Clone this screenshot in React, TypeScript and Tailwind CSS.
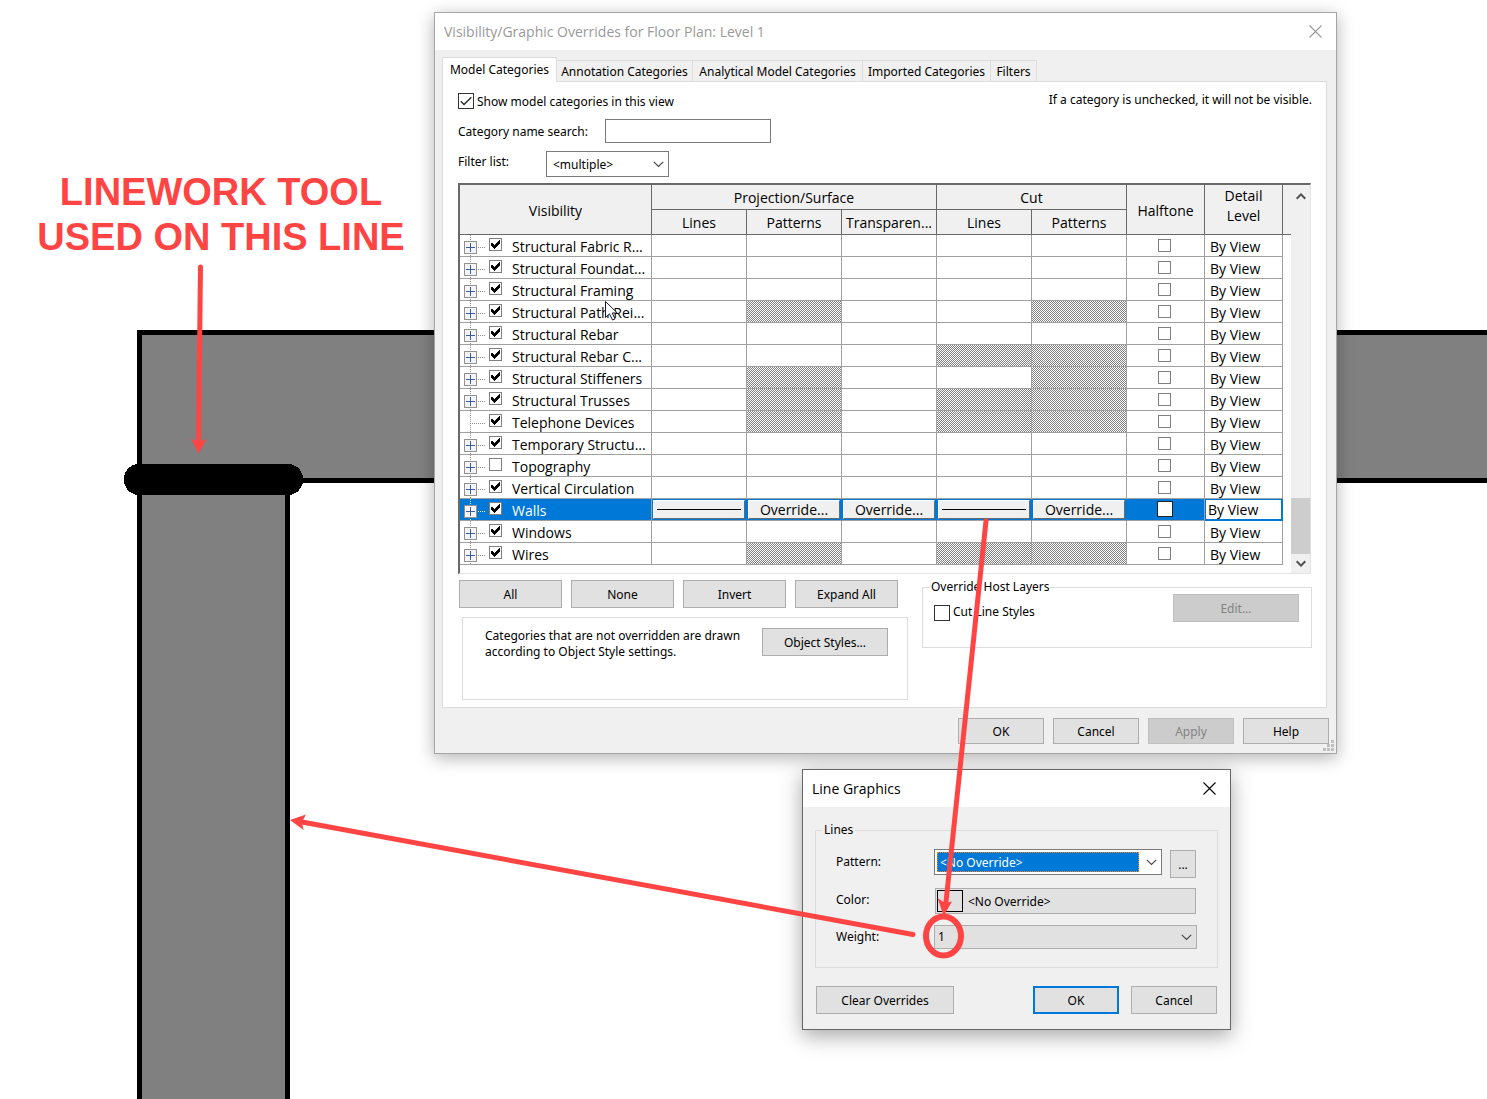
import type { ReactNode } from 'react';
import clsx from 'clsx';

type Row = {
  name: string;
  checked?: boolean;
  leaf?: boolean;
  // columns that can't be overridden, as indexes into the five override columns
  disabled?: number[];
  selected?: boolean;
};

const rows: Row[] = [
  { name: 'Structural Fabric R...' },
  { name: 'Structural Foundat...' },
  { name: 'Structural Framing' },
  { name: 'Structural Path Rei...', disabled: [1, 4] },
  { name: 'Structural Rebar' },
  { name: 'Structural Rebar C...', disabled: [3, 4] },
  { name: 'Structural Stiffeners', disabled: [1, 4] },
  { name: 'Structural Trusses', disabled: [1, 3, 4] },
  { name: 'Telephone Devices', leaf: true, disabled: [1, 3, 4] },
  { name: 'Temporary Structu...' },
  { name: 'Topography', checked: false },
  { name: 'Vertical Circulation' },
  { name: 'Walls', selected: true },
  { name: 'Windows' },
  { name: 'Wires', disabled: [1, 3, 4] },
];

const overrideColumns = ['line', 'text', 'text', 'line', 'text'];

const tabs = [
  'Annotation Categories',
  'Analytical Model Categories',
  'Imported Categories',
  'Filters',
];

const Chevron = ({ className }: { className?: string }) => (
  <svg className={clsx('pointer-events-none shrink-0', className)} width="11" height="7" viewBox="0 0 11 7" fill="none" stroke="#444" strokeWidth="1.1">
    <path d="M0.8 0.8 5.5 5.5 10.2 0.8" />
  </svg>
);

const CloseIcon = () => (
  <svg width="13" height="13" viewBox="0 0 13 13" stroke="currentColor" strokeWidth="1.1">
    <path d="M0.5 0.5 12.5 12.5M12.5 0.5 0.5 12.5" />
  </svg>
);

type ButtonProps = {
  children: ReactNode;
  className?: string;
  disabled?: boolean;
  primary?: boolean;
};

const Button = ({ children, className, disabled, primary }: ButtonProps) => (
  <button
    type="button"
    disabled={disabled}
    className={clsx(
      'shrink-0 pt-[2px]',
      primary ? 'border-2 border-[#0078d7]' : 'border',
      !primary && (disabled ? 'border-[#bfbfbf]' : 'border-[#adadad]'),
      disabled ? 'bg-[#cccccc] text-[#838383]' : 'bg-[#e1e1e1]',
      className,
    )}
  >
    {children}
  </button>
);

type CheckBoxProps = {
  label: string;
  id?: string;
  checked?: boolean;
  variant?: 'dialog' | 'grid' | 'halftone';
};

const CheckBox = ({ label, id, checked = false, variant = 'dialog' }: CheckBoxProps) => (
  <span className="inline-grid shrink-0 place-items-center">
    <input
      type="checkbox"
      id={id}
      aria-label={id ? undefined : label}
      defaultChecked={checked}
      className={clsx(
        'peer col-start-1 row-start-1 appearance-none border bg-white',
        variant === 'dialog' && 'size-4 border-[#333]',
        variant === 'grid' && 'size-[13px] border-[#808080]',
        variant === 'halftone' && 'size-4 border-[#222]',
      )}
    />
    {variant === 'grid' ? (
      <svg className="pointer-events-none col-start-1 row-start-1 hidden peer-checked:block" width="13" height="13" viewBox="0 0 13 13">
        <path d="M2 5h2v1h1v1h1V6h1V5h1V4h1V3h1V2h1v4h-1v1H9v1H8v1H7v1H6v1H5v-1H4V9H3V8H2z" />
      </svg>
    ) : (
      <svg className="pointer-events-none col-start-1 row-start-1 hidden peer-checked:block" width="16" height="16" viewBox="0 0 16 16" fill="none" stroke="#222" strokeWidth="1.3">
        <path d="M2.8 8.3 6 11.5 13.3 4.3" />
      </svg>
    )}
  </span>
);

const TreeNode = ({ leaf, selected, name }: { leaf?: boolean; selected?: boolean; name: string }) => {
  const lines = (
    <svg width="26" height="21" viewBox="0 0 26 21" shapeRendering="crispEdges" fill="none">
      <path d="M10.5 0V22M10 12.5H26" stroke={selected ? '#fff' : '#909090'} strokeDasharray="1 1" />
      {!leaf && (
        <>
          <rect x="4.5" y="6.5" width="12" height="12" rx="1" fill="#f4f4f4" stroke="#919191" />
          <path d="M6 12.5h9M10.5 8v9" stroke="#3b5da0" />
        </>
      )}
    </svg>
  );
  if (leaf) return lines;
  return (
    <button type="button" aria-label={`Expand ${name}`}>
      {lines}
    </button>
  );
};

const OverrideCell = ({ kind, disabled, selected }: { kind: string; disabled: boolean; selected?: boolean }) => (
  <td
    className={clsx(
      'border-r border-b p-0',
      selected ? 'border-r-[#0078d7] border-b-[#a0a0a0] bg-[#0078d7]' : 'border-[#a0a0a0]',
      disabled && 'bg-[repeating-conic-gradient(#808080_0_25%,#ffffff_0_50%)] bg-size-[2px_2px]',
    )}
  >
    {selected && (
      <button
        type="button"
        aria-label={kind === 'line' ? 'Line override' : undefined}
        className="ml-px flex h-[19px] w-[92px] items-center justify-center border border-t-white border-r-[#696969] border-b-[#696969] border-l-white bg-[#f0f0f0] px-[3px] text-black"
      >
        {kind === 'line' ? <span className="h-px w-full bg-black" /> : 'Override...'}
      </button>
    )}
  </td>
);

const headCell = 'border-r border-b border-[#696969] bg-[#f0f0f0] px-0 font-normal';

const CategoryTable = () => (
  <div className="flex border-t-2 border-r border-b border-l-2 border-t-[#696969] border-r-[#e3e3e3] border-b-[#e3e3e3] border-l-[#696969]">
    <div className="min-w-0 flex-1 pb-2">
      <table className="w-full table-fixed border-separate border-spacing-0 font-['Open_Sans','Noto_Sans',sans-serif] text-[14px] leading-[20px]">
        <colgroup>
          <col />
          <col className="w-[95px]" />
          <col className="w-[95px]" />
          <col className="w-[95px]" />
          <col className="w-[95px]" />
          <col className="w-[95px]" />
          <col className="w-[78px]" />
          <col className="w-[78px]" />
          <col className="w-[8px]" />
        </colgroup>
        <thead>
          <tr className="h-[25px]">
            <th rowSpan={2} className={clsx(headCell, 'pt-[2px] pb-0')}>Visibility</th>
            <th colSpan={3} className={clsx(headCell, 'pt-[2px] pb-0')}>Projection/Surface</th>
            <th colSpan={2} className={clsx(headCell, 'pt-[2px] pb-0')}>Cut</th>
            <th rowSpan={2} className={clsx(headCell, 'pt-[2px] pb-0')}>Halftone</th>
            <th rowSpan={2} className={clsx(headCell, 'pt-0 pb-2')}>Detail<br />Level</th>
            <td rowSpan={2} className="border-b border-[#696969] bg-[#f0f0f0] p-0" />
          </tr>
          <tr className="h-[25px]">
            <th className={clsx(headCell, 'pt-[2px] pb-0')}>Lines</th>
            <th className={clsx(headCell, 'pt-[2px] pb-0')}>Patterns</th>
            <th className={clsx(headCell, 'pt-[2px] pb-0')}>Transparen...</th>
            <th className={clsx(headCell, 'pt-[2px] pb-0')}>Lines</th>
            <th className={clsx(headCell, 'pt-[2px] pb-0')}>Patterns</th>
          </tr>
        </thead>
        <tbody>
          {rows.map(({ name, checked = true, leaf, disabled = [], selected }) => (
            <tr key={name} className="h-[22px]">
              <td className={clsx('border-r border-b border-[#a0a0a0] p-0', selected && 'bg-[#0078d7] text-white')}>
                <div className="flex h-[21px] items-center whitespace-nowrap">
                  <TreeNode leaf={leaf} selected={selected} name={name} />
                  <span className="ml-[3px] flex pb-[2px]">
                    <CheckBox variant="grid" label={name} checked={checked} />
                  </span>
                  <span className="ml-[10px] pt-[2px]">{name}</span>
                </div>
              </td>
              {overrideColumns.map((kind, i) => (
                <OverrideCell key={i} kind={kind} disabled={disabled.includes(i)} selected={selected} />
              ))}
              <td className={clsx('border-r border-b border-[#a0a0a0] p-0', selected && 'bg-[#0078d7]')}>
                <div className="flex justify-center pr-[2px] pb-px">
                  <CheckBox variant={selected ? 'halftone' : 'grid'} label={`${name} halftone`} />
                </div>
              </td>
              <td className={clsx('border-r border-b p-0', selected ? 'border-[#0078d7]' : 'border-[#a0a0a0]')}>
                {selected ? (
                  <select aria-label="Detail level" className="block h-[21px] w-full appearance-none border border-[#0078d7] bg-white pl-[2px]">
                    <option>By View</option>
                  </select>
                ) : (
                  <div className="h-[21px] pt-[2px] pl-[5px]">By View</div>
                )}
              </td>
              <td className="p-0" />
            </tr>
          ))}
        </tbody>
      </table>
    </div>
    <div className="flex w-[19px] shrink-0 flex-col bg-[#f0f0f0]">
      <button type="button" aria-label="Scroll up" className="flex h-[22px] items-center justify-center">
        <svg width="10" height="7" viewBox="0 0 10 7" fill="none" stroke="#505050" strokeWidth="2">
          <path d="M0.7 5.7 5 1.4 9.3 5.7" />
        </svg>
      </button>
      <div className="flex flex-1 flex-col justify-end">
        <div className="h-14 bg-[#cdcdcd]" />
      </div>
      <button type="button" aria-label="Scroll down" className="flex h-[19px] items-center justify-center">
        <svg width="10" height="7" viewBox="0 0 10 7" fill="none" stroke="#505050" strokeWidth="2">
          <path d="M0.7 1.3 5 5.6 9.3 1.3" />
        </svg>
      </button>
    </div>
  </div>
);

const OverridesDialog = () => (
  <section
    aria-label="Visibility/Graphic Overrides"
    className="absolute top-[12px] left-[434px] w-[903px] border border-[#a5a5a5] bg-[#f0f0f0] shadow-[0_4px_16px_rgba(0,0,0,0.3)]"
  >
    <header className="flex h-[37px] items-center justify-between bg-white pr-[14px] pl-[9px] font-['Open_Sans','Noto_Sans',sans-serif] text-[14px] text-[#999]">
      <h1>Visibility/Graphic Overrides for Floor Plan: Level 1</h1>
      <button type="button" aria-label="Close">
        <CloseIcon />
      </button>
    </header>

    <div className="pt-[7px] pr-2 pl-[7px]">
      <div role="tablist" className="flex items-end pr-4">
        <button type="button" role="tab" aria-selected="true" className="relative z-10 -mb-px h-[25px] w-[115px] border border-b-0 border-[#dcdcdc] bg-white pb-px">
          Model Categories
        </button>
        {tabs.map((tab, i) => (
          <button
            key={tab}
            type="button"
            role="tab"
            aria-selected="false"
            className={clsx(
              'h-[21px] border-t border-r border-[#dcdcdc] pt-[2px]',
              ['w-[136px]', 'w-[170px]', 'w-[128px]', 'w-[46px]'][i],
            )}
          >
            {tab}
          </button>
        ))}
      </div>

      <div className="mr-px border border-[#dcdcdc] bg-white pt-[11px] pr-[14px] pb-[7px] pl-[15px]">
        <div className="flex items-start justify-between">
          <div className="flex h-4 items-center gap-[3px]">
            <CheckBox id="show-model" label="Show model categories in this view" checked />
            <label htmlFor="show-model" className="pt-[2px]">Show model categories in this view</label>
          </div>
          <p className="leading-[14px]">If a category is unchecked, it will not be visible.</p>
        </div>
        <div className="mt-[10px] flex items-center">
          <label htmlFor="search" className="w-[147px] pt-[2px]">Category name search:</label>
          <input id="search" type="text" className="h-6 w-[166px] border border-[#7a7a7a] bg-white px-1" />
        </div>
        <div className="mt-2 flex items-start">
          <label htmlFor="filter" className="w-[88px] pt-[3px]">Filter list:</label>
          <div className="relative flex w-[123px] items-center">
            <select id="filter" className="h-[26px] w-full appearance-none border border-[#7a7a7a] bg-white pt-[2px] pl-[6px]">
              <option>&lt;multiple&gt;</option>
            </select>
            <Chevron className="absolute right-[5px]" />
          </div>
        </div>

        <div className="mt-[6px] mr-px">
          <CategoryTable />
        </div>

        <div className="mt-[6px] flex items-start justify-between">
          <div>
            <div className="ml-px flex gap-[9px]">
              <Button className="h-7 w-[103px]">All</Button>
              <Button className="h-7 w-[103px]">None</Button>
              <Button className="h-7 w-[103px]">Invert</Button>
              <Button className="h-7 w-[103px]">Expand All</Button>
            </div>
            <div className="mt-[9px] ml-1 flex h-[83px] w-[446px] items-start justify-between border border-[#dcdcdc] pt-[10px] pr-[19px] pl-[22px]">
              <p className="leading-[16px]">
                Categories that are not overridden are drawn
                <br />
                according to Object Style settings.
              </p>
              <Button className="h-7 w-[126px]">Object Styles...</Button>
            </div>
          </div>
          <fieldset className="flex h-[68px] w-[390px] items-start justify-between border border-[#dcdcdc] pr-3 pl-[11px]">
            <legend className="-ml-1 px-px leading-[14px]">Override Host Layers</legend>
            <div className="flex items-start gap-[3px] pt-[11px]">
              <CheckBox id="cut-line" label="Cut Line Styles" />
              <label htmlFor="cut-line" className="leading-[14px]">Cut Line Styles</label>
            </div>
            <Button disabled className="h-7 w-[126px]">Edit...</Button>
          </fieldset>
        </div>
      </div>
    </div>

    <footer className="relative flex justify-end gap-[9px] pt-[10px] pr-[7px] pb-[9px]">
      <Button className="h-[26px] w-[86px]">OK</Button>
      <Button className="h-[26px] w-[86px]">Cancel</Button>
      <Button disabled className="h-[26px] w-[86px]">Apply</Button>
      <Button className="h-[26px] w-[86px]">Help</Button>
      <svg className="absolute right-[2px] bottom-[2px]" width="11" height="11" viewBox="0 0 11 11" fill="#bfbfbf">
        <path d="M8 0h3v3H8zM4 4h3v3H4zM8 4h3v3H8zM0 8h3v3H0zM4 8h3v3H4zM8 8h3v3H8z" />
      </svg>
    </footer>
  </section>
);

const LineGraphicsDialog = () => (
  <section
    aria-label="Line Graphics"
    className="absolute top-[769px] left-[802px] w-[429px] border border-[#666] bg-[#f0f0f0] shadow-[0_6px_20px_rgba(0,0,0,0.35)]"
  >
    <header className="flex h-[37px] items-center justify-between bg-white pr-[14px] pl-[9px] font-['Open_Sans','Noto_Sans',sans-serif] text-[14px]">
      <h2>Line Graphics</h2>
      <button type="button" aria-label="Close">
        <CloseIcon />
      </button>
    </header>
    <div className="px-3 pt-[15px] pb-[15px]">
      <fieldset className="border border-[#dcdcdc] pr-5 pb-[18px] pl-5">
        <legend className="-ml-[14px] px-[2px] leading-[16px]">Lines</legend>
        <div className="mt-[11px] flex flex-col gap-[10px]">
          <div className="flex items-start">
            <label htmlFor="pattern" className="w-[98px] pt-[5px]">Pattern:</label>
            <div className="flex h-[26px] w-[228px] items-center border border-[#7a7a7a] bg-white p-[2px] pr-1">
              <select id="pattern" className="h-[20px] w-[202px] appearance-none border border-dotted border-[#ff8728] bg-[#0078d7] pt-[2px] pl-[2px] text-white">
                <option>&lt;No Override&gt;</option>
              </select>
              <Chevron className="ml-auto" />
            </div>
            <Button className="mt-px ml-2 h-7 w-[26px]">...</Button>
          </div>
          <div className="flex items-start">
            <span className="w-[99px] pt-1">Color:</span>
            <button type="button" className="flex h-[26px] w-[261px] items-center border border-[#adadad] bg-[#e1e1e1] pl-px">
              <span className="mr-[5px] h-[22px] w-[26px] border border-black" />
              <span className="pt-[2px]">&lt;No Override&gt;</span>
            </button>
          </div>
          <div className="mt-px flex items-center">
            <label htmlFor="weight" className="w-[98px]">Weight:</label>
            <div className="relative flex w-[263px] items-center">
              <select id="weight" className="h-[24px] w-full appearance-none border border-[#adadad] bg-[#e1e1e1] pl-[3px]">
                <option>1</option>
              </select>
              <Chevron className="absolute right-[5px]" />
            </div>
          </div>
        </div>
      </fieldset>
      <div className="mt-[18px] mr-px ml-px flex">
        <Button className="h-7 w-[138px]">Clear Overrides</Button>
        <Button primary className="ml-auto h-7 w-[86px]">OK</Button>
        <Button className="ml-3 h-7 w-[86px]">Cancel</Button>
      </div>
    </div>
  </section>
);

const WallPlan = () => (
  <svg className="absolute inset-0 size-full" shapeRendering="crispEdges">
    <rect x="137" y="330" width="100%" height="153" />
    <rect x="142" y="335" width="100%" height="143" fill="#808080" />
    <rect x="137" y="480" width="153" height="100%" />
    <rect x="142" y="480" width="143" height="100%" fill="#808080" />
    <rect x="124" y="464" width="179" height="31" rx="15" />
  </svg>
);

const Annotations = () => (
  <svg className="pointer-events-none absolute inset-0 size-full" fill="none" stroke="#ff4444" strokeLinecap="round">
    <path d="M200.5 267 198.5 443" strokeWidth="5" />
    <path d="M198.5 454 191 438.5 198.5 442 206.5 439z" fill="#ff4444" stroke="none" />
    <path d="M986 521 946 902" strokeWidth="5" />
    <path d="M943.7 916 937.5 898 945 903 952 901.5z" fill="#ff4444" stroke="none" />
    <path d="M913 934.5 302 822" strokeWidth="5" />
    <path d="M290 820 306 814.5 302 822 303.5 830z" fill="#ff4444" stroke="none" />
    <ellipse cx="943.5" cy="936" rx="17.5" ry="19.5" strokeWidth="6" />
  </svg>
);

const App = () => (
  <main className="relative min-h-screen overflow-hidden bg-white font-['Noto_Sans',sans-serif] text-[12px] leading-[16px] text-black">
    <WallPlan />
    <OverridesDialog />
    <LineGraphicsDialog />
    <p className="absolute top-[170px] left-[31px] w-[380px] text-center font-['Liberation_Sans',Arial,sans-serif] text-[38px] leading-[45px] font-bold text-[#ff4444]">
      LINEWORK TOOL
      <br />
      USED ON THIS LINE
    </p>
    <Annotations />
    <svg className="pointer-events-none absolute top-[301px] left-[605px]" width="13" height="20" viewBox="0 0 13 20" fill="#fff" stroke="#1a1a2a">
      <path d="M0.5 0.5V16.5L4.5 12.8 7.5 19 10 18 7.3 12H12.3z" />
    </svg>
  </main>
);

export default App;
